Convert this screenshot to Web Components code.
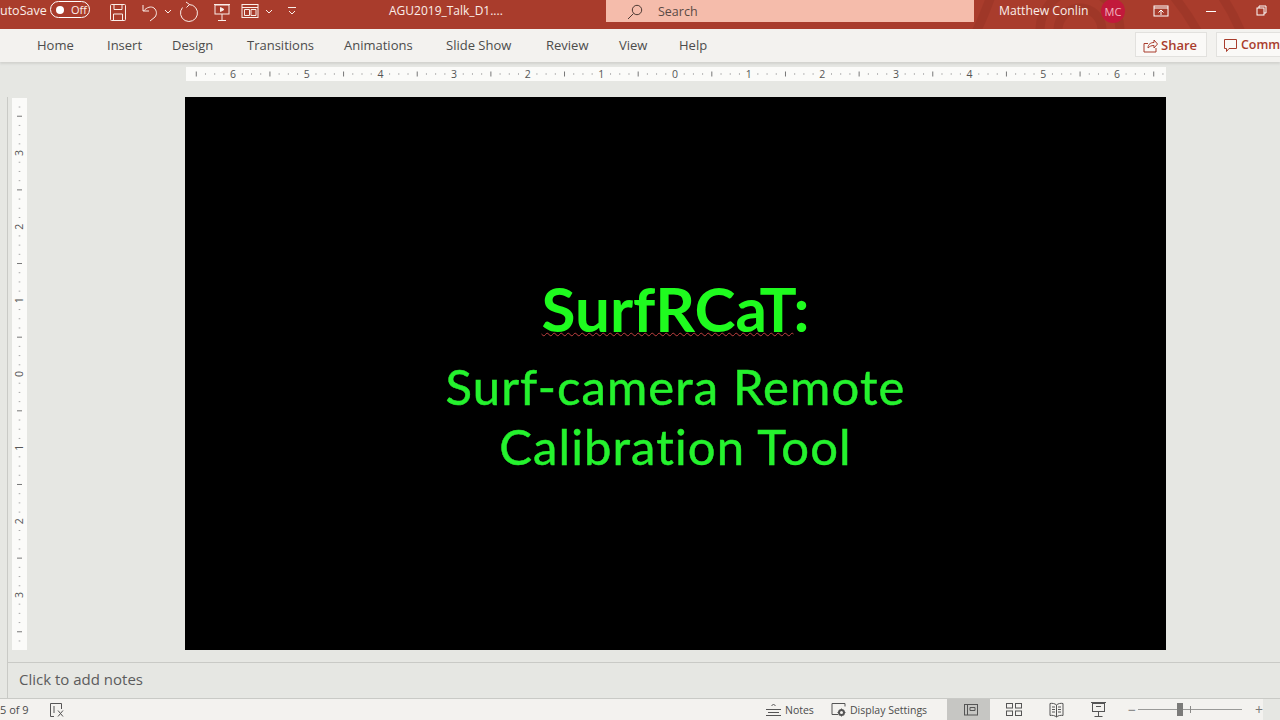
<!DOCTYPE html>
<html>
<head>
<meta charset="utf-8">
<title>AGU2019_Talk_D1</title>
<style>
  html, body { margin: 0; height: 100%; overflow: hidden; background: #e6e7e3; }
  body { width: 1280px; height: 720px; display: flex; flex-direction: column; font-family: "Open Sans", "Liberation Sans", sans-serif; }
</style>
</head>
<body>
<ppt-titlebar></ppt-titlebar>
<ppt-ribbon></ppt-ribbon>
<ppt-workspace>
  <ppt-slide>
    <span slot="title">SurfRCaT</span>
    <span slot="subtitle">Surf-camera Remote<br>Calibration Tool</span>
  </ppt-slide>
</ppt-workspace>
<ppt-statusbar></ppt-statusbar>

<script>
const ICONS = {
  save: '<rect x="1.500" y="1.500" width="15" height="16" rx="1"/><path d="M5 1.500v5h8v-5M4.500 17.500v-6.500h9v6.500"/>',
  undo: '<path d="M2 2v6h6M2.500 8C6 4 10 3 13 5c3 2.500 3 6.500 1 9l-5 4"/>',
  redo: '<path d="M7 -1l3.500 2.500-3 3"/><path d="M10 1.500A8.500 8.500 0 1 1 3.500 4.500"/>',
  caret: '<path d="M1 1l3 3 3-3"/>',
  present: '<rect x="1" y="2" width="14" height="9"/><path d="M0 1.500h16M8 11v6M4 17.500h8"/><path d="M6.500 4.500v4l3.500-2z" fill="currentColor"/>',
  layout: '<rect x="1" y="1.500" width="16" height="13"/><path d="M1 4.500h16M3.500 6.500h5v6h-5zM10 6.500h5v6h-5z"/>',
  more: '<path d="M1 1.500h8M2 5l3 3 3-3"/>',
  search: '<circle cx="10" cy="6" r="4.700"/><path d="M6.500 9.500L1 15"/>',
  ribbonmode: '<rect x="1" y="1" width="14" height="10"/><path d="M1 3h14M8 10V5M5.500 7.500L8 5l2.500 2.500"/>',
  minimize: '<path d="M0 .5h10"/>',
  restore: '<rect x="1" y="3" width="7" height="7"/><path d="M3 3V1h7v7H8"/>',
  share: '<path d="M1 6.500V15h12v-4M1 6.500h4"/><path d="M5 11c0-4 3-5.500 6-5.500V3l3.500 4-3.500 4V8.500c-3 0-4.500 1-6 2.500z"/>',
  comment: '<path d="M.5 1.500h12v9H5l-2.500 3v-3h-2z"/>',
  fit: '<path d="M5 14.500H1.500v-13h11V7M9 8.500l5 6M14 8.500l-5 6M5 4v7"/>',
  notes: '<path d="M5.500 4l2-2 2 2M0 7.500h15M2 10.500h11M0 13.500h15"/>',
  display: '<path d="M7 12.500H1v-11h13v3"/><circle cx="10.500" cy="10.500" r="2.500" stroke-width="2"/><path d="M10.500 6.500v1.500M10.500 13v1.500M6.500 10.500H8M13 10.500h1.500"/>',
  normal: '<rect x="1.500" y="1.500" width="13" height="10.500"/><path d="M4.500 1.500v10.500M7 4.500h5v3H7z"/>',
  sorter: '<rect x=".5" y="1.500" width="6" height="4.500"/><rect x="9.500" y="1.500" width="6" height="4.500"/><rect x=".5" y="9" width="6" height="4.500"/><rect x="9.500" y="9" width="6" height="4.500"/>',
  reading: '<path d="M7.500 3C6 1.500 3 1 1 1.500v12c2 -.5 5 0 6.500 1.500 1.500-1.500 4.500-2 6.500-1.500v-12C12 1 9 1.500 7.500 3zM7.500 3v12M3 5h3M3 7.500h3M3 10h3M9 5h3M9 7.500h3M9 10h3"/>',
  show: '<rect x="1.500" y="1.500" width="12" height="8"/><path d="M0 .5h15M7.500 9.500v5M3.500 14.500h8M5 4.500h5"/>'
};

class PptIcon extends HTMLElement {
  connectedCallback() {
    const w = this.getAttribute('w') || 16;
    const h = this.getAttribute('h') || w;
    const name = this.getAttribute('name');
    this.attachShadow({ mode: 'open' }).innerHTML = `
      <style>:host { display: inline-flex; flex: none; } svg { display: block; overflow: visible; }</style>
      <svg width="${w}" height="${h}" viewBox="0 0 ${w} ${h}" fill="none" stroke="currentColor" stroke-width="1">${ICONS[name]}</svg>`;
  }
}

class PptTitlebar extends HTMLElement {
  constructor() {
    super();
    this.attachShadow({ mode: 'open' }).innerHTML = `
      <style>
        :host { display: flex; flex: none; position: relative; height: 29px; background: #a93c2c; color: #fbeee9; font-size: 12.500px; overflow: hidden; }
        .texture { position: absolute; left: 960px; top: -30px; opacity: .35; }
        .qat { display: flex; align-items: flex-start; position: relative; width: 606px; flex: none; }
        .autosave { margin-top: 2px; line-height: 17px; width: 50px; }
        .toggle { width: 38px; height: 15px; border: 1.500px solid #fff; border-radius: 10px; margin-top: 1px; display: flex; align-items: center; font-size: 11px; }
        .toggle i { width: 8px; height: 8px; background: #fff; border-radius: 50%; margin: 0 7px 0 5px; }
        .qat ppt-icon { margin-top: 3px; }
        .doc { position: absolute; left: 389px; top: 2px; line-height: 17px; font-size: 12px; }
        .search { width: 368px; flex: none; height: 22px; background: #f5bcab; color: #5a4a45; display: flex; align-items: center; font-size: 12.500px; position: relative; }
        .search ppt-icon { margin-left: 21px; margin-right: 16px; color: #4e3a34; }
        .user { position: relative; display: flex; align-items: flex-start; flex: 1; }
        .name { margin-left: 25px; width: 102px; line-height: 22px; font-size: 12.200px; white-space: nowrap; }
        .avatar { width: 24px; height: 24px; margin-top: -1px; border-radius: 50%; background: #c2193b; color: #f3b6c0; font-size: 11px; display: flex; align-items: center; justify-content: center; }
        .user ppt-icon { margin-top: 5px; color: #fff; }
      </style>
      <svg class="texture" width="320" height="90" fill="none" stroke="#8f2f22" stroke-width="9">
        <circle cx="120" cy="60" r="22"/><circle cx="120" cy="60" r="40"/>
        <path d="M190 0c30 30 50 60 60 90M240 0c20 20 40 50 50 90M40 0c-10 30-20 60-40 90"/>
      </svg>
      <div class="qat">
        <span class="autosave">utoSave</span>
        <span class="toggle"><i></i>Off</span>
        <ppt-icon name="save" w="18" style="margin-left:19px"></ppt-icon>
        <ppt-icon name="undo" w="17" h="18" style="margin-left:14px"></ppt-icon>
        <ppt-icon name="caret" w="8" h="5" style="margin:9px 0 0 6px"></ppt-icon>
        <ppt-icon name="redo" w="20" h="18" style="margin-left:7px"></ppt-icon>
        <ppt-icon name="present" w="16" h="18" style="margin-left:15px"></ppt-icon>
        <ppt-icon name="layout" w="18" h="16" style="margin-left:11px"></ppt-icon>
        <ppt-icon name="caret" w="8" h="5" style="margin:9px 0 0 6px"></ppt-icon>
        <ppt-icon name="more" w="10" h="9" style="margin:6px 0 0 14px"></ppt-icon>
        <span class="doc">AGU2019_Talk_D1....</span>
      </div>
      <div class="search">
        <ppt-icon name="search" w="15"></ppt-icon>
        <span>Search</span>
      </div>
      <div class="user">
        <span class="name">Matthew Conlin</span>
        <span class="avatar">MC</span>
        <ppt-icon name="ribbonmode" w="16" h="12" style="margin:5px 0 0 28px"></ppt-icon>
        <ppt-icon name="minimize" w="10" h="2" style="margin:11px 0 0 37px"></ppt-icon>
        <ppt-icon name="restore" w="11" style="margin:5px 0 0 40px"></ppt-icon>
      </div>`;
  }
}

class PptRibbon extends HTMLElement {
  constructor() {
    super();
    const tabs = ['Home', 'Insert', 'Design', 'Transitions', 'Animations', 'Slide Show', 'Review', 'View', 'Help'];
    this.attachShadow({ mode: 'open' }).innerHTML = `
      <style>
        :host { display: flex; flex: none; height: 33px; box-sizing: border-box; padding-bottom: 2px; background: #f3f2ef; box-shadow: 0 2px 2px #d2d3cf; position: relative; z-index: 1; align-items: center; color: #4c4c4c; font-size: 13px; overflow: hidden; }
        .file { margin-left: -24px; width: 61px; }
        nav { display: grid; grid-template-columns: 70px 65px 75px 97px 102px 100px 73px 60px auto; flex: none; }
        .right { margin-left: auto; display: flex; gap: 9px; color: #a93c2c; font-weight: 600; }
        .btn { display: flex; align-items: center; gap: 3px; height: 25px; box-sizing: border-box; background: #faf9f7; border: 1px solid #e2e1de; padding: 0 7px; font-size: 13px; white-space: nowrap; }
        .btn.share { width: 72px; }
        .btn.comm { width: 64px; border-right: 0; gap: 4px; font-size: 12.400px; padding-right: 0; }
      </style>
      <span class="file">File</span>
      <nav>${tabs.map(t => `<span>${t}</span>`).join('')}</nav>
      <div class="right">
        <span class="btn share"><ppt-icon name="share" w="15" h="16"></ppt-icon>Share</span>
        <span class="btn comm"><ppt-icon name="comment" w="13" h="14"></ppt-icon>Comm</span>
      </div>`;
  }
}

class PptRuler extends HTMLElement {
  connectedCallback() {
    const vertical = this.hasAttribute('vertical');
    const len = Number(this.getAttribute('length'));
    const zero = Number(this.getAttribute('zero'));
    const inch = 73.65;
    const cross = vertical ? 15 : 14;
    const mid = cross / 2;
    let marks = '';
    for (let i = -64; i <= 64; i++) {
      const p = zero + i * inch / 8;
      if (p < 3 || p > len - 3) continue;
      if (i % 8 === 0) {
        const n = Math.abs(i / 8);
        marks += vertical
          ? `<text transform="translate(${mid + 3.5} ${p}) rotate(-90)" text-anchor="middle">${n}</text>`
          : `<text x="${p}" y="${mid + 3.5}" text-anchor="middle">${n}</text>`;
        continue;
      }
      const major = i % 4 === 0;
      const half = major ? 2.5 : 0.8;
      const cls = major ? 'major' : 'minor';
      marks += vertical
        ? `<path class="${cls}" d="M${mid - half} ${p}H${mid + half}"/>`
        : `<path class="${cls}" d="M${p} ${mid - half}V${mid + half}"/>`;
    }
    const w = vertical ? cross : len;
    const h = vertical ? len : cross;
    this.attachShadow({ mode: 'open' }).innerHTML = `
      <style>
        :host { display: block; flex: none; background: #fbfbf9; width: ${w}px; height: ${h}px; }
        svg { display: block; }
        text { font: 10.500px "Open Sans", "Liberation Sans", sans-serif; fill: #555; }
        path.major { stroke: #777; stroke-width: 1; }
        path.minor { stroke: #aaa; stroke-width: 1; }
      </style>
      <svg width="${w}" height="${h}">${marks}</svg>`;
  }
}

class PptWorkspace extends HTMLElement {
  constructor() {
    super();
    this.attachShadow({ mode: 'open' }).innerHTML = `
      <style>
        :host { display: flex; flex-direction: column; flex: 1; min-height: 0; background: #e6e7e3; }
        .top { padding: 5px 0 0 186px; height: 35px; box-sizing: border-box; flex: none; }
        .main { flex: 1; min-height: 0; display: flex; flex-direction: column; margin-left: 7px; border-left: 1px solid #c9cac6; }
        .stage { display: flex; flex: none; height: 565px; align-items: flex-start; }
        .side { margin: 1px 0 0 4px; }
        .canvas { margin-left: 158px; }
        .notes { flex: 1; border-top: 1px solid #c9cac6; padding-top: 6px; padding-left: 11px; color: #5c5c5c; font-size: 15px; line-height: 20px; }
      </style>
      <div class="top"><ppt-ruler length="980" zero="489"></ppt-ruler></div>
      <div class="main">
        <div class="stage">
          <ppt-ruler class="side" vertical length="552" zero="276"></ppt-ruler>
          <div class="canvas"><slot></slot></div>
        </div>
        <div class="notes">Click to add notes</div>
      </div>`;
  }
}

class PptSlide extends HTMLElement {
  constructor() {
    super();
    this.attachShadow({ mode: 'open' }).innerHTML = `
      <style>
        :host { display: flex; flex-direction: column; align-items: center; box-sizing: border-box; width: 981px; height: 553px; padding-top: 178px; background: #000; font-family: "Lato", "Open Sans", sans-serif; text-align: center; }
        .title { font-size: 62px; font-weight: 700; line-height: 66px; color: #1ffb1f; }
        .title .err { text-decoration: underline wavy #c04040 1px; text-underline-offset: 0; text-decoration-skip-ink: none; }
        .sub { font-size: 49px; line-height: 60px; color: #25f22e; margin-top: 15px; letter-spacing: 1.100px; -webkit-text-stroke: .5px #25f22e; }
      </style>
      <div class="title"><span class="err"><slot name="title"></slot></span>:</div>
      <div class="sub"><slot name="subtitle"></slot></div>`;
  }
}

class PptStatusbar extends HTMLElement {
  constructor() {
    super();
    this.attachShadow({ mode: 'open' }).innerHTML = `
      <style>
        :host { display: flex; flex: none; height: 22px; box-sizing: border-box; border-top: 1px solid #c9cac6; background: #f3f2ef; color: #4c4c4c; font-size: 10.500px; align-items: center; overflow: hidden; white-space: nowrap; }
        .count { width: 49px; font-size: 11px; }
        .spacer { flex: 1; }
        .item { display: flex; align-items: center; gap: 4px; }
        .views { display: flex; margin-left: 18px; height: 21px; align-items: center; }
        .views span { width: 42.500px; height: 21px; box-sizing: border-box; padding-left: 6px; display: flex; align-items: center; justify-content: center; color: #555; }
        .views .on { background: #c6c6c3; }
        .zoom { display: flex; align-items: center; margin-left: 11px; color: #777; width: 135px; height: 21px; font-size: 14px; }
        .zoom .minus { width: 10px; }
        .track { position: relative; width: 104px; height: 1px; background: #9a9a98; margin-right: 13px; }
        .track b { position: absolute; left: 39px; top: -6px; width: 6px; height: 13px; background: #7b7b79; }
        .track i { position: absolute; left: 52px; top: -3px; width: 1px; height: 7px; background: #8a8a88; }
        .end { width: 17px; height: 21px; background: #e6e7e3; }
      </style>
      <span class="count">5 of 9</span>
      <ppt-icon name="fit" w="15" style="color:#555"></ppt-icon>
      <span class="spacer"></span>
      <span class="item" style="width:65px"><ppt-icon name="notes" w="15" style="color:#555"></ppt-icon>Notes</span>
      <span class="item" style="width:98px"><ppt-icon name="display" w="15" style="color:#555"></ppt-icon>Display Settings</span>
      <div class="views">
        <span class="on"><ppt-icon name="normal" w="16" h="14"></ppt-icon></span>
        <span><ppt-icon name="sorter" w="16" h="15"></ppt-icon></span>
        <span><ppt-icon name="reading" w="15" h="16"></ppt-icon></span>
        <span><ppt-icon name="show" w="15" h="16"></ppt-icon></span>
      </div>
      <div class="zoom">
        <span class="minus">−</span>
        <div class="track"><b></b><i></i></div>
        <span>+</span>
      </div>
      <span class="end"></span>`;
  }
}

customElements.define('ppt-icon', PptIcon);
customElements.define('ppt-titlebar', PptTitlebar);
customElements.define('ppt-ribbon', PptRibbon);
customElements.define('ppt-ruler', PptRuler);
customElements.define('ppt-workspace', PptWorkspace);
customElements.define('ppt-slide', PptSlide);
customElements.define('ppt-statusbar', PptStatusbar);
</script>
</body>
</html>
